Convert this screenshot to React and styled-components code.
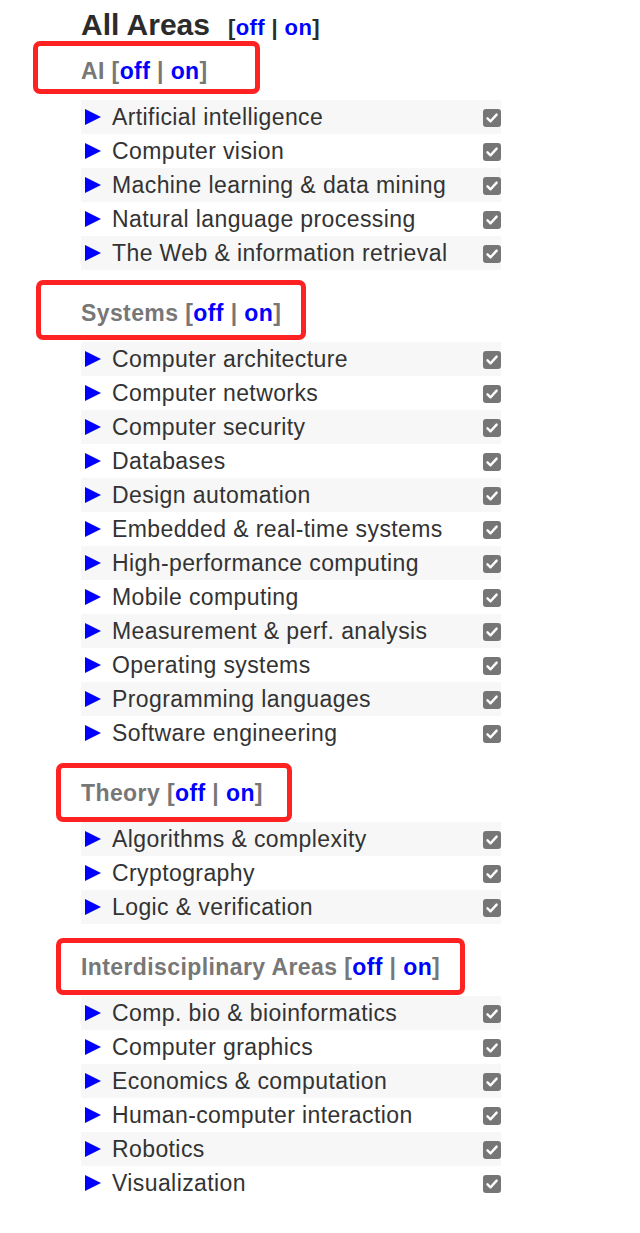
import styled, { createGlobalStyle } from "styled-components";

const GlobalStyle = createGlobalStyle`
  body {
    margin: 0;
    background: #fff;
    font-family: "Liberation Sans", Arial, sans-serif;
  }
`

const Page = styled.div`
  width: 420px;
  margin-left: 81px;
  padding-bottom: 33px;
`

const Title = styled.div`
  margin-top: 7px;
  height: 36px;
  font-size: 30px;
  line-height: 36px;
  font-weight: 700;
  color: #2b2b2b;
  white-space: nowrap;
`

const TitleToggle = styled.span`
  margin-left: 18px;
  font-size: 22px;
  line-height: 1;
  letter-spacing: 0.4px;
  color: #2b2b2b;
`

const Group = styled.div`
  & + & {
    margin-top: 15px;
  }
`

const GroupHeader = styled.div`
  position: relative;
  padding: 15px 0 16px;
  font-size: 23px;
  line-height: 26px;
  font-weight: 700;
  letter-spacing: 0.4px;
  color: #777;

  &::after {
    content: "";
    position: absolute;
    left: ${(p) => p.$mark.left}px;
    top: ${(p) => p.$mark.top}px;
    width: ${(p) => p.$mark.width}px;
    height: ${(p) => p.$mark.height}px;
    box-sizing: border-box;
    border: 5px solid #ff2222;
    border-radius: 7px;
    pointer-events: none;
  }
`

const Link = styled.a`
  color: #0000ff;
  text-decoration: none;
  cursor: pointer;
`

const RowList = styled.div`
  display: flex;
  flex-direction: column;
`

const Row = styled.div`
  display: flex;
  align-items: center;
  height: 34px;
  padding-left: 4px;
  color: #333;
  font-size: 23px;
  letter-spacing: 0.4px;

  &:nth-child(odd) {
    background: #f7f7f7;
  }
`

const Arrow = styled.span`
  width: 0;
  height: 0;
  border-left: 16px solid #0000ff;
  border-top: 8px solid transparent;
  border-bottom: 8px solid transparent;
  margin-right: 11px;
  flex-shrink: 0;
`

const Label = styled.span`
  flex: 1;
  white-space: nowrap;
`

const Check = styled.span`
  width: 18px;
  height: 18px;
  margin-top: 2px;
  border-radius: 3px;
  background: #767676;
  display: flex;
  align-items: center;
  justify-content: center;
`

function Toggle() {
  return (
    <>
      [<Link>off</Link> | <Link>on</Link>]
    </>
  )
}

const groups = [
  {
    name: "AI",
    mark: { left: -48, top: -2, width: 227, height: 53 },
    areas: [
      "Artificial intelligence",
      "Computer vision",
      "Machine learning & data mining",
      "Natural language processing",
      "The Web & information retrieval",
    ],
  },
  {
    name: "Systems",
    mark: { left: -45, top: -5, width: 270, height: 60 },
    areas: [
      "Computer architecture",
      "Computer networks",
      "Computer security",
      "Databases",
      "Design automation",
      "Embedded & real-time systems",
      "High-performance computing",
      "Mobile computing",
      "Measurement & perf. analysis",
      "Operating systems",
      "Programming languages",
      "Software engineering",
    ],
  },
  {
    name: "Theory",
    mark: { left: -25, top: -2, width: 236, height: 59 },
    areas: ["Algorithms & complexity", "Cryptography", "Logic & verification"],
  },
  {
    name: "Interdisciplinary Areas",
    mark: { left: -25, top: -1, width: 409, height: 57 },
    areas: [
      "Comp. bio & bioinformatics",
      "Computer graphics",
      "Economics & computation",
      "Human-computer interaction",
      "Robotics",
      "Visualization",
    ],
  },
]

export default function App() {
  return (
    <>
      <GlobalStyle />
      <Page>
        <Title>
          All Areas
          <TitleToggle>
            <Toggle />
          </TitleToggle>
        </Title>
        {groups.map((g) => (
          <Group key={g.name}>
            <GroupHeader $mark={g.mark}>
              {g.name} <Toggle />
            </GroupHeader>
            <RowList>
              {g.areas.map((a) => (
                <Row key={a}>
                  <Arrow />
                  <Label>{a}</Label>
                  <Check>
                    <svg width="14" height="14" viewBox="0 0 14 14">
                      <path d="M2.5 7.3 L5.6 10.3 L11.6 3.6" fill="none" stroke="#fff" strokeWidth="2.4" strokeLinecap="round" strokeLinejoin="round" />
                    </svg>
                  </Check>
                </Row>
              ))}
            </RowList>
          </Group>
        ))}
      </Page>
    </>
  )
}
